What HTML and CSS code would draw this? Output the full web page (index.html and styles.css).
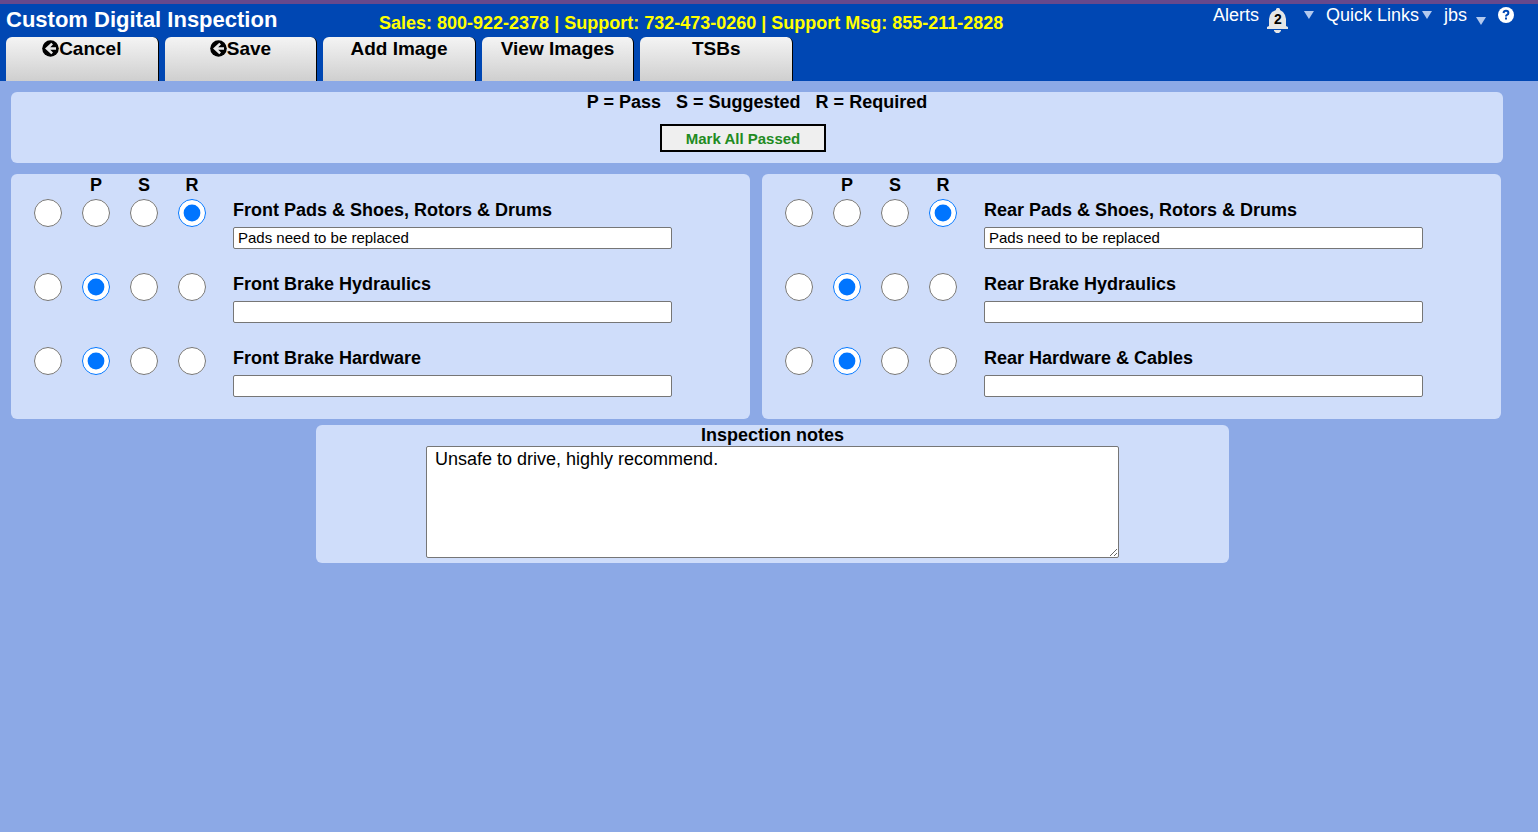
FILE: index.html
```html
<!DOCTYPE html>
<html lang="en">
<head>
    <meta charset="UTF-8">
    <meta name="viewport" content="width=device-width, initial-scale=1.0">
    <title>Custom Digital Inspection</title>
    <link rel="stylesheet" href="styles.css">
</head>
<body>
    <header class="header">
        <div class="top-bar">
            <h1>Custom Digital Inspection</h1>
            <div class="phones">Sales: 800-922-2378 | Support: 732-473-0260 | Support Msg: 855-211-2828</div>
            <nav class="user-nav">
                <a href="#" class="alerts">Alerts
                    <span class="bell">
                        <svg width="22" height="26" viewBox="0 0 22 26">
                            <path d="M9 1L10 0H12L13 1V2L16 4L18 7L19 11V18L21 19V21H0V19L2 18V11L3 7L5 4L9 2Z" fill="#e6e6e6"/>
                            <path d="M7 22H14V23L12 25H9L7 23Z" fill="#e6e6e6"/>
                        </svg>
                        <span class="bell-count">2</span>
                    </span>
                    <span class="arrow"></span>
                </a>
                <a href="#" class="quick-links">Quick Links <span class="arrow"></span></a>
                <a href="#" class="user">jbs <span class="arrow arrow-low"></span></a>
                <a href="#" class="help" aria-label="Help">
                    <svg width="16" height="16" viewBox="0 0 16 16">
                        <circle cx="8" cy="8" r="8" fill="#fff"/>
                        <path d="M5.500 6Q5.800 3.800 8 3.800Q10.400 3.800 10.400 5.900Q10.400 7.200 9 7.900Q8 8.400 8 9.400" fill="none" stroke="#0047b3" stroke-width="2"/>
                        <rect x="7" y="10.500" width="2" height="2" fill="#0047b3"/>
                    </svg>
                </a>
            </nav>
        </div>
        <div class="tabs">
            <button type="button" class="tab">
                <svg class="tab-icon" width="17" height="17" viewBox="0 0 17 17">
                    <circle cx="8.500" cy="8.500" r="8.300" fill="#000"/>
                    <path d="M9.300 2.800L3 8.500L9.300 14.200L11 12.400L8.200 9.700H14V7.300H8.200L11 4.600Z" fill="#e9e9e9"/>
                </svg>Cancel
            </button>
            <button type="button" class="tab">
                <svg class="tab-icon" width="17" height="17" viewBox="0 0 17 17">
                    <circle cx="8.500" cy="8.500" r="8.300" fill="#000"/>
                    <path d="M9.300 2.800L3 8.500L9.300 14.200L11 12.400L8.200 9.700H14V7.300H8.200L11 4.600Z" fill="#e9e9e9"/>
                </svg>Save
            </button>
            <button type="button" class="tab">Add Image</button>
            <button type="button" class="tab">View Images</button>
            <button type="button" class="tab">TSBs</button>
        </div>
    </header>

    <main>
        <section class="panel legend">
            <div>P = Pass &nbsp; S = Suggested &nbsp; R = Required</div>
            <div class="mark-row">
                <button type="button" class="mark-all">Mark All Passed</button>
            </div>
        </section>

        <div class="columns">
            <section class="panel checks">
                <div class="radios heads"><span></span><span>P</span><span>S</span><span>R</span></div>
                <div class="check">
                    <div class="radios">
                        <input type="radio" name="front_pads" aria-label="None">
                        <input type="radio" name="front_pads" aria-label="Pass">
                        <input type="radio" name="front_pads" aria-label="Suggested">
                        <input type="radio" name="front_pads" aria-label="Required" checked>
                    </div>
                    <div class="detail">
                        <label for="front_pads_note">Front Pads &amp; Shoes, Rotors &amp; Drums</label>
                        <input type="text" id="front_pads_note" value="Pads need to be replaced">
                    </div>
                </div>
                <div class="check">
                    <div class="radios">
                        <input type="radio" name="front_hyd" aria-label="None">
                        <input type="radio" name="front_hyd" aria-label="Pass" checked>
                        <input type="radio" name="front_hyd" aria-label="Suggested">
                        <input type="radio" name="front_hyd" aria-label="Required">
                    </div>
                    <div class="detail">
                        <label for="front_hyd_note">Front Brake Hydraulics</label>
                        <input type="text" id="front_hyd_note">
                    </div>
                </div>
                <div class="check">
                    <div class="radios">
                        <input type="radio" name="front_hw" aria-label="None">
                        <input type="radio" name="front_hw" aria-label="Pass" checked>
                        <input type="radio" name="front_hw" aria-label="Suggested">
                        <input type="radio" name="front_hw" aria-label="Required">
                    </div>
                    <div class="detail">
                        <label for="front_hw_note">Front Brake Hardware</label>
                        <input type="text" id="front_hw_note">
                    </div>
                </div>
            </section>

            <section class="panel checks">
                <div class="radios heads"><span></span><span>P</span><span>S</span><span>R</span></div>
                <div class="check">
                    <div class="radios">
                        <input type="radio" name="rear_pads" aria-label="None">
                        <input type="radio" name="rear_pads" aria-label="Pass">
                        <input type="radio" name="rear_pads" aria-label="Suggested">
                        <input type="radio" name="rear_pads" aria-label="Required" checked>
                    </div>
                    <div class="detail">
                        <label for="rear_pads_note">Rear Pads &amp; Shoes, Rotors &amp; Drums</label>
                        <input type="text" id="rear_pads_note" value="Pads need to be replaced">
                    </div>
                </div>
                <div class="check">
                    <div class="radios">
                        <input type="radio" name="rear_hyd" aria-label="None">
                        <input type="radio" name="rear_hyd" aria-label="Pass" checked>
                        <input type="radio" name="rear_hyd" aria-label="Suggested">
                        <input type="radio" name="rear_hyd" aria-label="Required">
                    </div>
                    <div class="detail">
                        <label for="rear_hyd_note">Rear Brake Hydraulics</label>
                        <input type="text" id="rear_hyd_note">
                    </div>
                </div>
                <div class="check">
                    <div class="radios">
                        <input type="radio" name="rear_hw" aria-label="None">
                        <input type="radio" name="rear_hw" aria-label="Pass" checked>
                        <input type="radio" name="rear_hw" aria-label="Suggested">
                        <input type="radio" name="rear_hw" aria-label="Required">
                    </div>
                    <div class="detail">
                        <label for="rear_hw_note">Rear Hardware &amp; Cables</label>
                        <input type="text" id="rear_hw_note">
                    </div>
                </div>
            </section>
        </div>

        <section class="panel notes">
            <label for="notes">Inspection notes</label>
            <textarea id="notes">Unsafe to drive, highly recommend.</textarea>
        </section>
    </main>
</body>
</html>
```

FILE: styles.css
```css
* {
    box-sizing: border-box;
}

body {
    font-family: Arial, "Liberation Sans", sans-serif;
    font-size: 18px;
    line-height: 22px;
    margin: 0;
    color: #000;
    background: #8ca9e6;
    min-height: 100vh;
}

button,
input,
textarea {
    font-family: inherit;
    margin: 0;
}

/* header */
.header {
    background: #0047b3;
    border-top: 4px solid #66498c;
    padding: 0 6px;
}

.top-bar {
    display: flex;
    height: 33px;
    color: #fff;
}

h1 {
    font-size: 22px;
    line-height: 32px;
    margin: 0;
    width: 373px;
}

.phones {
    color: #ff0;
    font-weight: bold;
    line-height: 38px;
}

.user-nav {
    display: flex;
    margin-left: auto;
    padding-right: 18px;
}

.user-nav a {
    display: flex;
    color: #fff;
    text-decoration: none;
}

.alerts {
    gap: 8px;
    margin-right: 12px;
}

.quick-links {
    gap: 3px;
    margin-right: 12px;
}

.user {
    gap: 9px;
    margin-right: 12px;
}

.bell {
    position: relative;
    width: 22px;
    padding-top: 4px;
    margin-right: 7px;
}

.bell svg,
.help svg {
    display: block;
}

.bell-count {
    position: absolute;
    top: 4px;
    left: 0;
    width: 22px;
    text-align: center;
    color: #000;
    font-size: 14px;
    font-weight: bold;
}

.arrow {
    width: 10px;
    height: 8px;
    margin-top: 7px;
    background: #b3c9ee;
    clip-path: polygon(0 0, 100% 0, 50% 100%);
}

.arrow-low {
    margin-top: 13px;
}

.help {
    padding-top: 3px;
}

.tabs {
    display: flex;
    gap: 6px;
}

.tab {
    width: 10%;
    height: 44px;
    padding: 0;
    display: flex;
    justify-content: center;
    align-items: flex-start;
    border: 0;
    border-right: 1px solid #000;
    border-radius: 6px 6px 0 0;
    background: linear-gradient(#f4f4f4, #cfcfcf);
    color: #000;
    font-size: 19px;
    line-height: 24px;
    font-weight: bold;
}

.tab-icon {
    margin-top: 3px;
}

/* panels */
main {
    padding: 11px 35px 11px 11px;
}

.panel {
    background: #cfddfa;
    border-radius: 6px;
}

.legend {
    height: 71px;
    text-align: center;
    font-weight: bold;
    line-height: 20px;
}

.mark-row {
    padding: 12px 28px 0 0;
}

.mark-all {
    display: block;
    margin: 0 auto;
    padding: 0 24px;
    height: 28px;
    border: 2px solid #000;
    background: #efefef;
    color: #228b22;
    font-size: 15px;
    font-weight: bold;
}

.columns {
    display: grid;
    grid-template-columns: 1fr 1fr;
    gap: 12px;
    margin: 11px 2px 6px 0;
}

.checks {
    display: flex;
    flex-direction: column;
    gap: 24px;
    padding: 0 0 22px 23px;
}

.radios {
    display: grid;
    grid-template-columns: repeat(4, 28px);
    gap: 20px;
    flex: none;
}

.radios input {
    width: 28px;
    height: 28px;
}

.heads {
    height: 25px;
    margin-bottom: -24px;
    text-align: center;
    font-weight: bold;
}

.check {
    display: flex;
    height: 50px;
    gap: 27px;
}

.detail {
    flex: 1;
}

.detail label {
    display: block;
    font-weight: bold;
    margin-bottom: 6px;
}

.detail input {
    display: block;
    width: 85%;
    height: 22px;
    padding: 0 4px 1px;
    border: 1px solid #767676;
    border-radius: 2px;
    font-size: 15px;
}

.notes {
    width: 61.2%;
    margin-left: 305px;
    padding: 0 110px 5px;
    text-align: center;
    font-weight: bold;
}

.notes label {
    display: block;
    line-height: 21px;
}

.notes textarea {
    display: block;
    width: 100%;
    height: 112px;
    padding: 2px 8px;
    border: 1px solid #767676;
    border-radius: 2px;
    font-size: 18px;
    line-height: 20px;
}
```
